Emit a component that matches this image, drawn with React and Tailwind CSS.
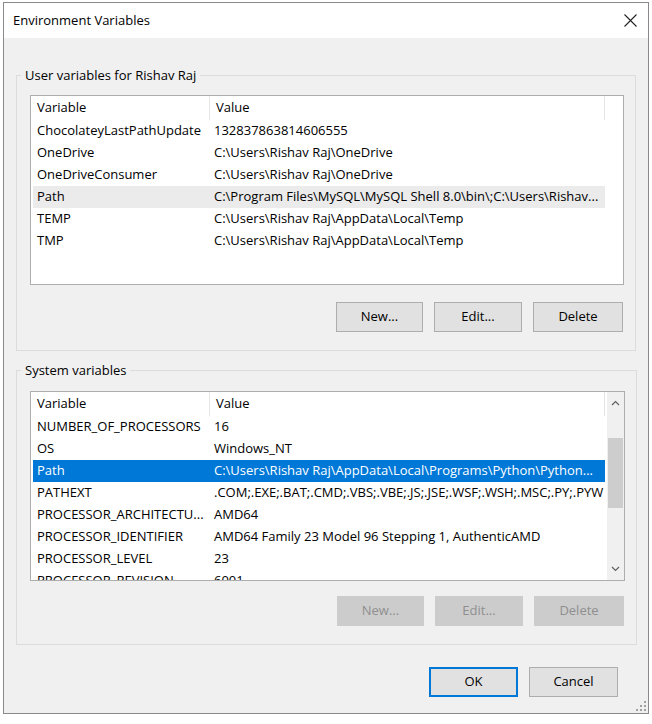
import React from "react";

const userRows = [
  ["ChocolateyLastPathUpdate", "132837863814606555"],
  ["OneDrive", "C:\\Users\\Rishav Raj\\OneDrive"],
  ["OneDriveConsumer", "C:\\Users\\Rishav Raj\\OneDrive"],
  ["Path", "C:\\Program Files\\MySQL\\MySQL Shell 8.0\\bin\\;C:\\Users\\Rishav..."],
  ["TEMP", "C:\\Users\\Rishav Raj\\AppData\\Local\\Temp"],
  ["TMP", "C:\\Users\\Rishav Raj\\AppData\\Local\\Temp"],
];

const sysRows = [
  ["NUMBER_OF_PROCESSORS", "16"],
  ["OS", "Windows_NT"],
  ["Path", "C:\\Users\\Rishav Raj\\AppData\\Local\\Programs\\Python\\Python..."],
  ["PATHEXT", ".COM;.EXE;.BAT;.CMD;.VBS;.VBE;.JS;.JSE;.WSF;.WSH;.MSC;.PY;.PYW"],
  ["PROCESSOR_ARCHITECTU...", "AMD64"],
  ["PROCESSOR_IDENTIFIER", "AMD64 Family 23 Model 96 Stepping 1, AuthenticAMD"],
  ["PROCESSOR_LEVEL", "23"],
  ["PROCESSOR_REVISION", "6001"],
];

function Row({ name, value, variant }) {
  const bg =
    variant === "selected"
      ? "bg-[#0078d7] text-white"
      : variant === "soft"
      ? "bg-[#ebebeb] text-black"
      : "text-black";
  return (
    <div className={`flex h-[22px] items-center shrink-0 whitespace-nowrap ${bg}`}>
      <div className="w-[177px] pl-[4px] overflow-hidden">{name}</div>
      <div className="flex-1 pl-[4px] overflow-hidden">{value}</div>
    </div>
  );
}

function ListBox({ rows, selectedIndex, variant, scroll }) {
  return (
    <div className="h-[190px] border border-[#adadad] bg-white flex overflow-hidden">
      <div className="w-[572px] ml-[2px] flex flex-col overflow-hidden">
        <div className="flex h-[24px] items-center shrink-0 text-black">
          <div className="w-[177px] pl-[4px] h-full flex items-center border-r border-[#e5e5e5]">Variable</div>
          <div className="flex-1 pl-[6px] h-full flex items-center border-r border-[#e5e5e5]">Value</div>
        </div>
        {rows.map((r, i) => (
          <Row key={i} name={r[0]} value={r[1]} variant={i === selectedIndex ? variant : null} />
        ))}
      </div>
      {scroll && (
        <div className="w-[17px] ml-[2px] bg-[#f0f0f0] flex flex-col">
          <div className="h-[22px] flex items-center justify-center">
            <svg width="9" height="6" viewBox="0 0 9 6"><path d="M1 5L4.5 1.5L8 5" fill="none" stroke="#606060" strokeWidth="1.2" /></svg>
          </div>
          <div className="mt-[24px] h-[70px] bg-[#cdcdcd] mx-[1px]" />
          <div className="flex-1" />
          <div className="h-[22px] flex items-center justify-center">
            <svg width="9" height="6" viewBox="0 0 9 6"><path d="M1 1L4.5 4.5L8 1" fill="none" stroke="#606060" strokeWidth="1.2" /></svg>
          </div>
        </div>
      )}
    </div>
  );
}

function Btn({ children, disabled, primary, w = "w-[88px]" }) {
  const cls = disabled
    ? "bg-[#cccccc] border-[#cccccc] text-[#8f8f8f]"
    : primary
    ? "bg-[#e1e1e1] border-2 border-[#0078d7] text-black"
    : "bg-[#e1e1e1] border-[#adadad] text-black";
  return (
    <div className={`${w} h-[30px] border flex items-center justify-center ${cls}`}>{children}</div>
  );
}

function Group({ title, children, pt = "pt-[11px]" }) {
  return (
    <fieldset className={`border border-[#dcdcdc] pl-[13px] pr-[11px] pb-[18px] ${pt} mx-0`}>
      <legend className="-ml-[9px] px-[4px] h-[18px] leading-[18px]">{title}</legend>
      {children}
    </fieldset>
  );
}

export default function App() {
  return (
    <div className="w-[652px] h-[724px] bg-white overflow-hidden font-['Open_Sans','Noto_Sans',sans-serif] text-[13px] text-black">
      <div className="ml-[3px] mt-[2px] w-[646px] h-[712px] border border-[#8a8a8a] bg-[#f0f0f0] flex flex-col relative">
        <div className="h-[35px] bg-white flex items-center justify-between pl-[9px] pr-[11px] shrink-0">
          <span className="text-[13px]">Environment Variables</span>
          <svg width="13" height="13" viewBox="0 0 13 13">
            <path d="M0.5 0.5L12.5 12.5M12.5 0.5L0.5 12.5" stroke="#222" strokeWidth="1.1" />
          </svg>
        </div>
        <div className="pl-[12px] pr-[12px] pt-[28px]">
          <Group title="User variables for Rishav Raj">
            <ListBox rows={userRows} selectedIndex={3} variant="soft" />
            <div className="flex justify-end gap-[11px] mt-[17px] pr-[1px]">
              <Btn w="w-[87px]">New...</Btn>
              <Btn>Edit...</Btn>
              <Btn w="w-[90px]">Delete</Btn>
            </div>
          </Group>
          <div className="h-[10px]" />
          <Group title="System variables" pt="pt-[12px]">
            <ListBox rows={sysRows} selectedIndex={2} variant="selected" scroll />
            <div className="flex justify-end gap-[11px] mt-[15px] pr-[1px]">
              <Btn w="w-[87px]" disabled>New...</Btn>
              <Btn disabled>Edit...</Btn>
              <Btn w="w-[90px]" disabled>Delete</Btn>
            </div>
          </Group>
          <div className="flex justify-end gap-[11px] mt-[22px] pr-[18px]">
            <Btn primary w="w-[89px]">OK</Btn>
            <Btn w="w-[89px]">Cancel</Btn>
          </div>
        </div>
        <svg className="absolute right-[2px] bottom-[2px]" width="10" height="10" viewBox="0 0 10 10">
          <g fill="#a0a0a0">
            <rect x="8" y="0" width="2" height="2" />
            <rect x="4" y="4" width="2" height="2" />
            <rect x="8" y="4" width="2" height="2" />
            <rect x="0" y="8" width="2" height="2" />
            <rect x="4" y="8" width="2" height="2" />
            <rect x="8" y="8" width="2" height="2" />
          </g>
        </svg>
      </div>
    </div>
  );
}
